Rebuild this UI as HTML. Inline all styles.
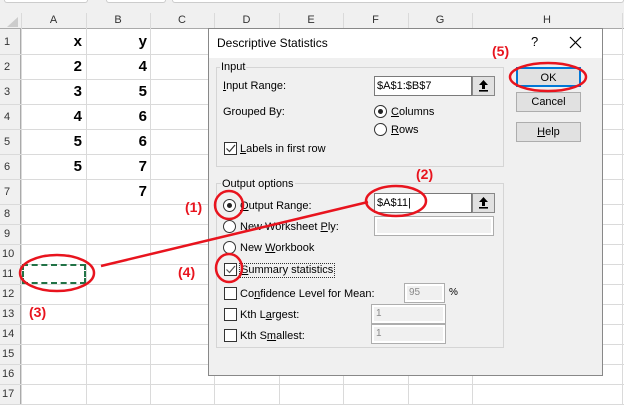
<!DOCTYPE html>
<html><head><style>
*{margin:0;padding:0;box-sizing:border-box}
body{width:624px;height:405px;overflow:hidden;background:#fff;font-family:"Liberation Sans",sans-serif;position:relative}
.a{position:absolute}
.t{position:absolute;font-size:11px;color:#000;white-space:nowrap;line-height:13px}
.hd{position:absolute;font-size:11px;color:#333;text-align:center}
.num{position:absolute;font-size:15px;font-weight:bold;text-align:right;width:30px}
.box{position:absolute;background:#fff;border:1px solid #7a7a7a}
.dis{position:absolute;background:#fff;border:1px solid #adadad;font-size:10px;color:#8a8a8a;padding:2px}
.dis div{background:#f0f0f0;height:14px;padding-left:2px;line-height:14px}
.rad{position:absolute;width:13px;height:13px;border:1px solid #333;border-radius:50%;background:#fff}
.chk{position:absolute;width:13px;height:13px;border:1px solid #333;background:#fff}
.btn{position:absolute;width:65px;height:20px;background:#e1e1e1;border:1px solid #adadad;font-size:11px;text-align:center;line-height:18px}
.grp{position:absolute;border:1px solid #d5d5d5}
</style></head><body>
<div class="a" style="left:0;top:0;width:624px;height:13px;background:#f0f0f0"></div>
<div class="a" style="left:4px;top:0;width:84px;height:3px;background:#fff;border:1px solid #ccc;border-top:0;border-radius:0 0 4px 4px"></div>
<div class="a" style="left:106px;top:0;width:60px;height:3px;background:#fff;border:1px solid #ccc;border-top:0;border-radius:0 0 4px 4px"></div>
<div class="a" style="left:172px;top:0;width:452px;height:3px;background:#fff;border:1px solid #ccc;border-top:0;border-radius:0 0 4px 4px"></div>
<div class="a" style="left:0;top:13px;width:624px;height:16px;background:#f0f0f0;border-bottom:1px solid #aaa"></div>
<div class="a" style="left:0;top:29px;width:21px;height:376px;background:#f0f0f0;border-right:1px solid #aaa"></div>
<svg class="a" style="left:5px;top:16px" width="14" height="12"><polygon points="13,1 13,11 2,11" fill="#ccc"/></svg>
<svg class="a" style="left:0;top:0" width="624" height="405">
<g stroke="#dadada" stroke-width="1">
<line x1="21.5" y1="13" x2="21.5" y2="405"/>
<line x1="86.5" y1="13" x2="86.5" y2="405"/><line x1="150.5" y1="13" x2="150.5" y2="405"/>
<line x1="214.5" y1="13" x2="214.5" y2="405"/><line x1="279.5" y1="13" x2="279.5" y2="405"/>
<line x1="343.5" y1="13" x2="343.5" y2="405"/><line x1="408.5" y1="13" x2="408.5" y2="405"/>
<line x1="472.5" y1="13" x2="472.5" y2="405"/><line x1="622.5" y1="13" x2="622.5" y2="405"/>
<line x1="0" y1="54.5" x2="624" y2="54.5"/><line x1="0" y1="79.5" x2="624" y2="79.5"/>
<line x1="0" y1="104.5" x2="624" y2="104.5"/><line x1="0" y1="129.5" x2="624" y2="129.5"/>
<line x1="0" y1="154.5" x2="624" y2="154.5"/><line x1="0" y1="179.5" x2="624" y2="179.5"/>
<line x1="0" y1="204.5" x2="624" y2="204.5"/><line x1="0" y1="224.5" x2="624" y2="224.5"/>
<line x1="0" y1="244.5" x2="624" y2="244.5"/><line x1="0" y1="264.5" x2="624" y2="264.5"/>
<line x1="0" y1="284.5" x2="624" y2="284.5"/><line x1="0" y1="304.5" x2="624" y2="304.5"/>
<line x1="0" y1="324.5" x2="624" y2="324.5"/><line x1="0" y1="344.5" x2="624" y2="344.5"/>
<line x1="0" y1="364.5" x2="624" y2="364.5"/><line x1="0" y1="384.5" x2="624" y2="384.5"/>
<line x1="0" y1="404.5" x2="624" y2="404.5"/>
</g></svg>
<div class="hd" style="left:21px;top:14px;width:65px">A</div>
<div class="hd" style="left:86px;top:14px;width:64px">B</div>
<div class="hd" style="left:150px;top:14px;width:64px">C</div>
<div class="hd" style="left:214px;top:14px;width:65px">D</div>
<div class="hd" style="left:279px;top:14px;width:64px">E</div>
<div class="hd" style="left:343px;top:14px;width:65px">F</div>
<div class="hd" style="left:408px;top:14px;width:64px">G</div>
<div class="hd" style="left:472px;top:14px;width:150px">H</div>
<div class="hd" style="left:0;top:36px;width:21px;text-align:left;padding-left:4px">1</div>
<div class="hd" style="left:0;top:61px;width:21px;text-align:left;padding-left:4px">2</div>
<div class="hd" style="left:0;top:86px;width:21px;text-align:left;padding-left:4px">3</div>
<div class="hd" style="left:0;top:111px;width:21px;text-align:left;padding-left:4px">4</div>
<div class="hd" style="left:0;top:136px;width:21px;text-align:left;padding-left:4px">5</div>
<div class="hd" style="left:0;top:161px;width:21px;text-align:left;padding-left:4px">6</div>
<div class="hd" style="left:0;top:186px;width:21px;text-align:left;padding-left:4px">7</div>
<div class="hd" style="left:0;top:208px;width:21px;text-align:left;padding-left:4px">8</div>
<div class="hd" style="left:0;top:228px;width:21px;text-align:left;padding-left:4px">9</div>
<div class="hd" style="left:0;top:248px;width:21px;text-align:left;padding-left:2px">10</div>
<div class="hd" style="left:0;top:268px;width:21px;text-align:left;padding-left:2px">11</div>
<div class="hd" style="left:0;top:288px;width:21px;text-align:left;padding-left:2px">12</div>
<div class="hd" style="left:0;top:308px;width:21px;text-align:left;padding-left:2px">13</div>
<div class="hd" style="left:0;top:328px;width:21px;text-align:left;padding-left:2px">14</div>
<div class="hd" style="left:0;top:348px;width:21px;text-align:left;padding-left:2px">15</div>
<div class="hd" style="left:0;top:368px;width:21px;text-align:left;padding-left:2px">16</div>
<div class="hd" style="left:0;top:388px;width:21px;text-align:left;padding-left:2px">17</div>
<div class="num" style="left:52px;top:33px">x</div><div class="num" style="left:117px;top:33px">y</div>
<div class="num" style="left:52px;top:58px">2</div><div class="num" style="left:117px;top:58px">4</div>
<div class="num" style="left:52px;top:83px">3</div><div class="num" style="left:117px;top:83px">5</div>
<div class="num" style="left:52px;top:108px">4</div><div class="num" style="left:117px;top:108px">6</div>
<div class="num" style="left:52px;top:133px">5</div><div class="num" style="left:117px;top:133px">6</div>
<div class="num" style="left:52px;top:158px">5</div><div class="num" style="left:117px;top:158px">7</div>
<div class="num" style="left:117px;top:183px">7</div>
<div class="a" style="left:22px;top:264px;width:64px;height:20px;border:2px dashed #217346"></div>
<div class="a" style="left:208px;top:28px;width:395px;height:348px;background:#f0f0f0;border:1px solid #888"></div>
<div class="a" style="left:209px;top:29px;width:393px;height:29px;background:#fff"></div>
<div class="t" style="left:217px;top:37px;font-size:12px">Descriptive Statistics</div>
<div class="t" style="left:531px;top:35px;font-size:13px">?</div>
<svg class="a" style="left:569px;top:36px" width="13" height="13"><path d="M1 1L12 12M12 1L1 12" stroke="#000" stroke-width="1.2"/></svg>
<div class="grp" style="left:216px;top:67px;width:288px;height:100px"></div>
<div class="t" style="left:220px;top:61px;background:#f0f0f0;padding:0 1px">Input</div>
<div class="t" style="left:223px;top:80px"><u>I</u>nput Range:</div>
<div class="box" style="left:374px;top:76px;width:98px;height:20px;font-size:11px;padding:3px 2px">$A$1:$B$7</div>
<div class="btn" style="left:472px;top:76px;width:23px;height:20px;border-color:#888"><svg width="21" height="18"><path d="M10.5 3L6 8H9V12H12V8H15Z" fill="#000"/><rect x="6" y="13" width="9" height="1.6" fill="#000"/></svg></div>
<div class="t" style="left:223px;top:106px">Grouped By:</div>
<div class="rad" style="left:374px;top:105px"><div class="a" style="left:3px;top:3px;width:5px;height:5px;border-radius:50%;background:#222"></div></div>
<div class="t" style="left:391px;top:106px"><u>C</u>olumns</div>
<div class="rad" style="left:374px;top:123px"></div>
<div class="t" style="left:391px;top:124px"><u>R</u>ows</div>
<div class="chk" style="left:224px;top:142px"><svg width="11" height="11" style="position:absolute;left:0;top:0"><path d="M1.5 5.5L4.5 8.5L10 2" fill="none" stroke="#333" stroke-width="1.2"/></svg></div>
<div class="t" style="left:240px;top:143px"><u>L</u>abels in first row</div>
<div class="grp" style="left:216px;top:183px;width:288px;height:165px"></div>
<div class="t" style="left:221px;top:178px;background:#f0f0f0;padding:0 1px">Output options</div>
<div class="rad" style="left:223px;top:199px"><div class="a" style="left:3px;top:3px;width:5px;height:5px;border-radius:50%;background:#222"></div></div>
<div class="t" style="left:240px;top:200px"><u>O</u>utput Range:</div>
<div class="box" style="left:374px;top:193px;width:98px;height:20px;font-size:11px;padding:3px 2px">$A$11|</div>
<div class="btn" style="left:472px;top:193px;width:23px;height:20px;border-color:#888"><svg width="21" height="18"><path d="M10.5 3L6 8H9V12H12V8H15Z" fill="#000"/><rect x="6" y="13" width="9" height="1.6" fill="#000"/></svg></div>
<div class="rad" style="left:223px;top:220px"></div>
<div class="t" style="left:240px;top:221px">New Worksheet <u>P</u>ly:</div>
<div class="dis" style="left:374px;top:216px;width:120px;height:20px"><div></div></div>
<div class="rad" style="left:223px;top:241px"></div>
<div class="t" style="left:240px;top:242px">New <u>W</u>orkbook</div>
<div class="chk" style="left:224px;top:263px"><svg width="11" height="11" style="position:absolute;left:0;top:0"><path d="M1.5 5.5L4.5 8.5L10 2" fill="none" stroke="#555" stroke-width="1.2"/></svg></div>
<div class="t" style="left:239px;top:263px;border:1px dotted #333;padding:0 1px"><u>S</u>ummary statistics</div>
<div class="chk" style="left:224px;top:287px"></div>
<div class="t" style="left:240px;top:288px">Co<u>n</u>fidence Level for Mean:</div>
<div class="dis" style="left:404px;top:283px;width:41px;height:20px"><div>95</div></div>
<div class="t" style="left:449px;top:286px;font-size:10px">%</div>
<div class="chk" style="left:224px;top:308px"></div>
<div class="t" style="left:240px;top:309px">Kth L<u>a</u>rgest:</div>
<div class="dis" style="left:371px;top:304px;width:75px;height:20px"><div>1</div></div>
<div class="chk" style="left:224px;top:329px"></div>
<div class="t" style="left:240px;top:330px">Kth S<u>m</u>allest:</div>
<div class="dis" style="left:371px;top:324px;width:75px;height:20px"><div>1</div></div>
<div class="btn" style="left:516px;top:67px;border:2px solid #0078d7">OK</div>
<div class="btn" style="left:516px;top:92px">Cancel</div>
<div class="btn" style="left:516px;top:122px"><u>H</u>elp</div>
<svg class="a" style="left:0;top:0" width="624" height="405">
<g fill="none" stroke="#e8141e" stroke-width="2.5">
<ellipse cx="548" cy="77" rx="38" ry="14"/>
<ellipse cx="396" cy="201" rx="30" ry="15"/>
<ellipse cx="229" cy="205" rx="14" ry="14"/>
<ellipse cx="229" cy="268" rx="13" ry="14"/>
<ellipse cx="57" cy="273" rx="37" ry="18"/>
<line x1="101" y1="266" x2="368" y2="202"/>
</g>
<g fill="#e8141e" font-family="Liberation Sans" font-size="14" font-weight="bold">
<text x="492" y="56">(5)</text>
<text x="416" y="179">(2)</text>
<text x="185" y="212">(1)</text>
<text x="178" y="277">(4)</text>
<text x="29" y="317">(3)</text>
</g></svg>
</body></html>
